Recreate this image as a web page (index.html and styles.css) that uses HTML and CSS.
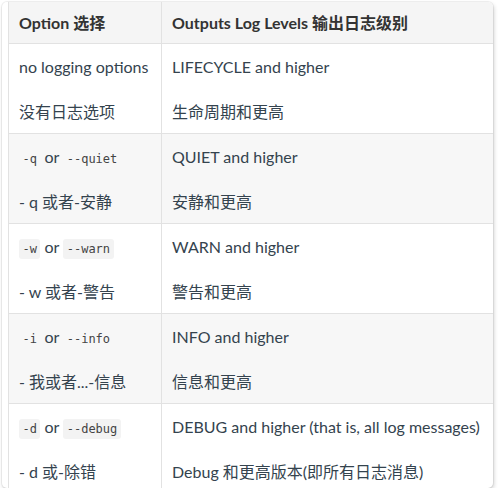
FILE: index.html
```html
<!DOCTYPE html>
<html lang="zh">
<head>
<meta charset="utf-8">
<link rel="stylesheet" href="styles.css">
</head>
<body>
<div class="card">
  <table class="log-table">
    <thead>
      <tr><th class="col-opt">Option 选择</th><th>Outputs Log Levels 输出日志级别</th></tr>
    </thead>
    <tbody>
      <tr>
        <td><div class="line">no logging options</div><div class="line">没有日志选项</div></td>
        <td><div class="line">LIFECYCLE and higher</div><div class="line">生命周期和更高</div></td>
      </tr>
      <tr class="alt">
        <td><div class="line"><code>-q</code> or <code>--quiet</code></div><div class="line">- q 或者-安静</div></td>
        <td><div class="line">QUIET and higher</div><div class="line">安静和更高</div></td>
      </tr>
      <tr>
        <td><div class="line"><code>-w</code> or <code>--warn</code></div><div class="line">- w 或者-警告</div></td>
        <td><div class="line">WARN and higher</div><div class="line">警告和更高</div></td>
      </tr>
      <tr class="alt">
        <td><div class="line"><code>-i</code> or <code>--info</code></div><div class="line">- 我或者...-信息</div></td>
        <td><div class="line">INFO and higher</div><div class="line">信息和更高</div></td>
      </tr>
      <tr class="last">
        <td><div class="line"><code>-d</code> or <code>--debug</code></div><div class="line">- d 或-除错</div></td>
        <td><div class="line">DEBUG and higher (that is, all log messages)</div><div class="line">Debug 和更高版本(即所有日志消息)</div></td>
      </tr>
    </tbody>
  </table>
</div>
</body>
</html>
```
FILE: styles.css
```css
html, body {
  margin: 0;
  padding: 0;
  background: #ffffff;
}
body {
  padding: 2px 7px 0 2px;
  font-family: Lato, "Noto Sans CJK SC", sans-serif;
  font-size: 16px;
  color: #34434e;
}
.card {
  width: 491px;
  height: 486px;
  box-sizing: border-box;
  padding-left: 6px;
  border-radius: 5px;
  overflow: hidden;
  background: #fff;
  box-shadow: 1px 2px 4px rgba(0, 0, 0, 0.18), 0 0 0 1px rgba(0, 0, 0, 0.05);
}
.log-table {
  border-collapse: collapse;
  width: 486px;
  table-layout: fixed;
}
.col-opt {
  width: 153px;
  box-sizing: border-box;
}
th, td {
  text-align: left;
  vertical-align: top;
  border-left: 1px solid #e2e2e2;
  padding: 0 10px;
}
th {
  background: #f5f5f5;
  color: #333;
  font-weight: 700;
  height: 22px;
  line-height: 22px;
  padding-top: 10px;
  padding-bottom: 9px;
  border-bottom: 1px solid #e2e2e2;
}
td {
  padding-top: 12px;
  padding-bottom: 9.5px;
  border-bottom: 1px solid #e2e2e2;
}
.line {
  height: 22.5px;
  line-height: 22.5px;
  white-space: nowrap;
}
.line + .line {
  margin-top: 22.5px;
}
tr.alt td {
  background: #f7f7f7;
}
tr.last td {
  border-bottom: none;
}
code {
  font-family: "DejaVu Sans Mono", monospace;
  font-size: 12px;
  color: #444;
  background: #f3f3f3;
  border-radius: 3px;
  padding: 3px 3.5px;
}
tr.alt code {
  background: transparent;
}
```
